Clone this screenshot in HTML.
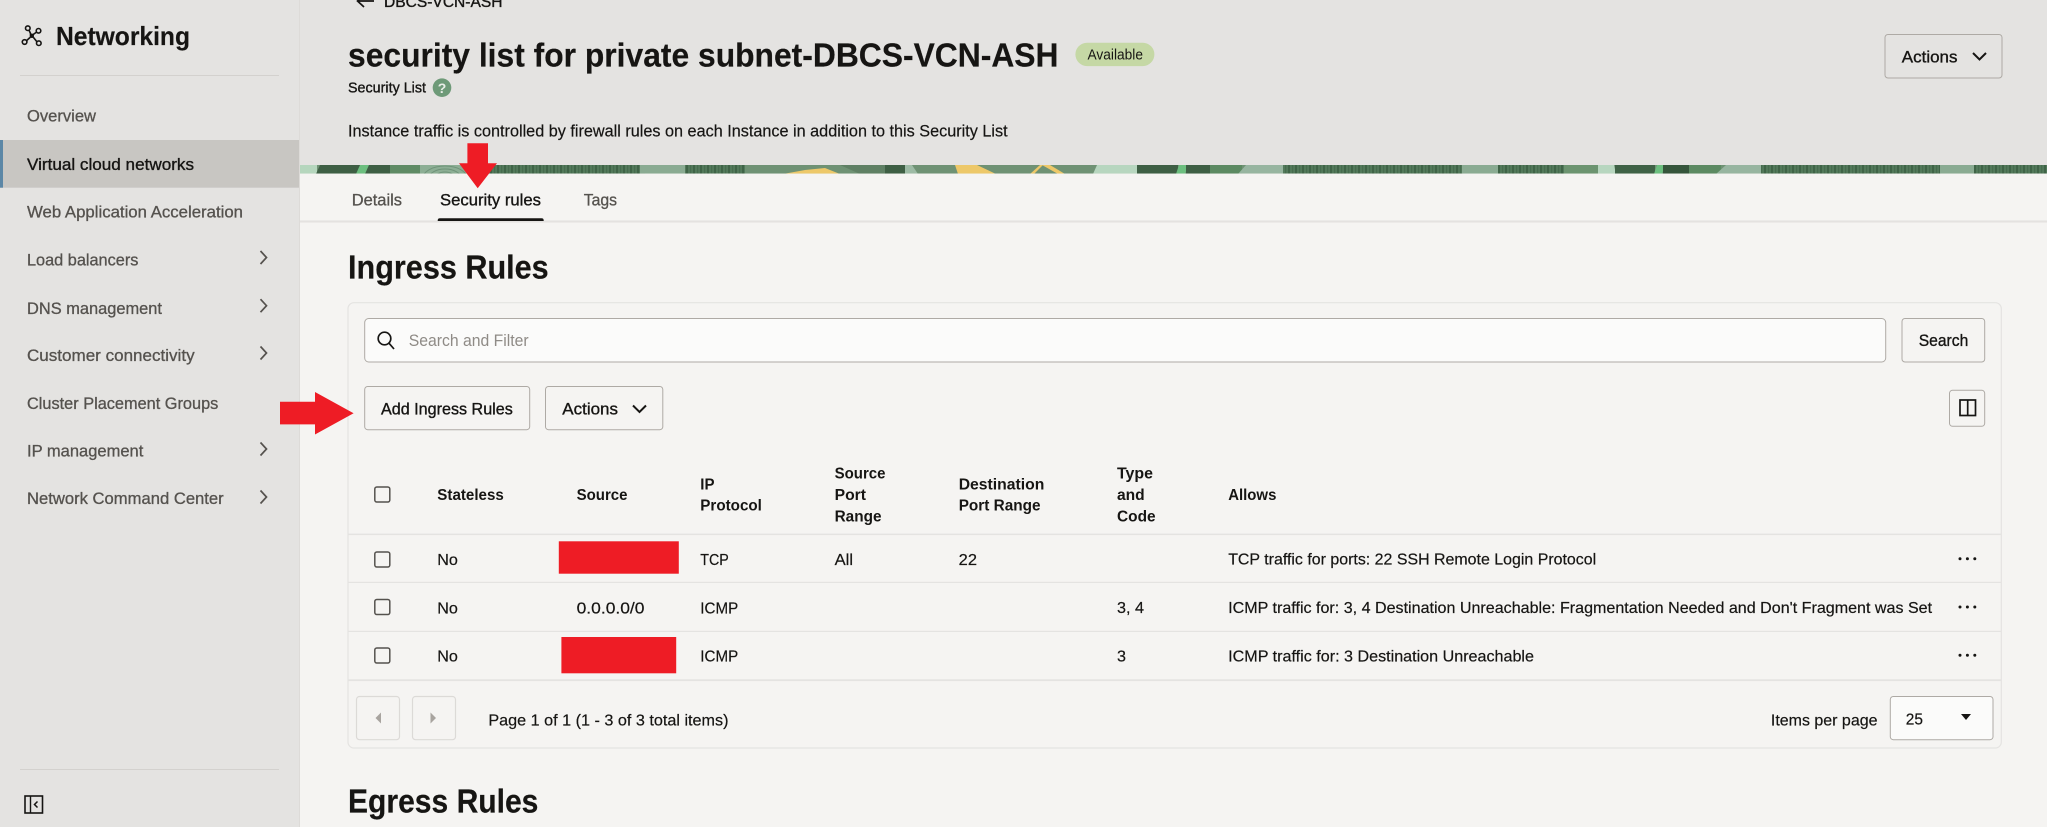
<!DOCTYPE html>
<html lang="en"><head><meta charset="utf-8"><title>security list for private subnet-DBCS-VCN-ASH</title>
<style>
html,body{margin:0;padding:0;width:2047px;height:827px;overflow:hidden;background:#f5f4f2}
svg{display:block;filter:blur(.3px)}
text{font-family:"Liberation Sans",sans-serif;font-size:16px;fill:#161513;white-space:pre}
.n{fill:#55524e;stroke:#55524e;stroke-width:.3px;font-size:16.5px;transform:translateY(-.7px)}
.a{stroke:#161513;stroke-width:.35px;font-size:16.5px}
.u{stroke:#161513;stroke-width:.2px;transform:translateY(-.7px)}
.b{font-weight:700;font-size:16px;transform:translateY(-.7px)}
.h{font-weight:700;font-size:33px;stroke:#161513;stroke-width:.2px}
.btn{fill:none;stroke:#aeaaa5;stroke-width:1}
.chev{fill:none;stroke:#161513;stroke-width:2}
.nch{fill:none;stroke:#55524e;stroke-width:1.7}
.cb{fill:none;stroke:#55524e;stroke-width:1.5}
.line{fill:#e4e3e1}
</style></head><body>
<svg xmlns="http://www.w3.org/2000/svg" width="2047" height="827" viewBox="0 0 2047 827">
<defs>
<pattern id="ln" width="7" height="9" patternUnits="userSpaceOnUse"><rect width="7" height="9" fill="#52795a"/><rect width="2" height="9" fill="#3f6447"/><rect x="4" width="1.2" height="9" fill="#466c4e"/></pattern>
<clipPath id="bn"><rect x="300" y="165" width="1747" height="8.6"/></clipPath>
</defs>
<rect width="2047" height="827" fill="#f5f4f2"/>

<!-- sidebar -->
<rect width="300" height="827" fill="#e4e3e1"/>
<rect x="299" width="1" height="827" fill="#dddbd8"/>
<g fill="none" stroke="#161513" stroke-width="1.6">
<circle cx="27.8" cy="28.2" r="2.3"/><circle cx="38.5" cy="30.8" r="2.3"/><circle cx="24.6" cy="42" r="2.3"/><circle cx="38.8" cy="43.2" r="2.3"/>
<path d="M29 30.2 31 34.5M36.7 32 33.2 34.5M26.6 40.6 30 37.5M36.9 41.8 33.5 37.5"/><rect x="30" y="34" width="3.6" height="3.6" fill="#161513" stroke-width=".6"/>
</g>
<text x="56" y="45" class="h" style="font-size:26px" textLength="134" lengthAdjust="spacingAndGlyphs">Networking</text>
<rect x="20" y="75" width="259" height="1" fill="#d3d1ce"/>
<rect y="140" width="299" height="47.7" fill="#c8c6c2"/>
<rect y="140" width="3" height="47.7" fill="#5c87a6"/>
<text x="27" y="122.3" class="n" textLength="69" lengthAdjust="spacingAndGlyphs">Overview</text>
<text x="27" y="170" class="a" textLength="167" lengthAdjust="spacingAndGlyphs">Virtual cloud networks</text>
<text x="27" y="218" class="n" textLength="216" lengthAdjust="spacingAndGlyphs">Web Application Acceleration</text>
<text x="27" y="266.3" class="n" textLength="111.4" lengthAdjust="spacingAndGlyphs">Load balancers</text>
<text x="27" y="314.5" class="n" textLength="135" lengthAdjust="spacingAndGlyphs">DNS management</text>
<text x="27" y="361.8" class="n" textLength="167.6" lengthAdjust="spacingAndGlyphs">Customer connectivity</text>
<text x="27" y="409.6" class="n" textLength="191.3" lengthAdjust="spacingAndGlyphs">Cluster Placement Groups</text>
<text x="27" y="457.3" class="n" textLength="116.3" lengthAdjust="spacingAndGlyphs">IP management</text>
<text x="27" y="504.7" class="n" textLength="196.7" lengthAdjust="spacingAndGlyphs">Network Command Center</text>
<path class="nch" d="M260.5 251 266.5 257.5 260.5 264"/>
<path class="nch" d="M260.5 299.2 266.5 305.7 260.5 312.2"/>
<path class="nch" d="M260.5 346.5 266.5 353 260.5 359.5"/>
<path class="nch" d="M260.5 442.5 266.5 449 260.5 455.5"/>
<path class="nch" d="M260.5 490.5 266.5 497 260.5 503.5"/>
<rect x="20" y="769" width="259" height="1" fill="#d3d1ce"/>
<rect x="25" y="796" width="17.5" height="17" fill="none" stroke="#161513" stroke-width="1.6"/>
<path d="M30.5 796V813" stroke="#161513" stroke-width="1.4"/>
<path d="M37.5 801.5 34.5 804.5 37.5 807.5" fill="none" stroke="#161513" stroke-width="1.5"/>

<!-- header -->
<rect x="300" width="1747" height="165" fill="#e4e3e1"/>
<path d="M374 1H358M364 -5 357.5 1 364 7" fill="none" stroke="#161513" stroke-width="1.7"/>
<text x="384" y="6.8" class="a" style="font-size:15.5px" textLength="118.5" lengthAdjust="spacingAndGlyphs">DBCS-VCN-ASH</text>
<text x="348" y="66.5" class="h" textLength="710.5" lengthAdjust="spacingAndGlyphs">security list for private subnet-DBCS-VCN-ASH</text>
<rect x="1075.4" y="42.7" width="79" height="23.4" rx="11.7" fill="#c5d8a5"/>
<text x="1087.5" y="59.7" style="font-size:14.5px" textLength="55.5" lengthAdjust="spacingAndGlyphs">Available</text>
<text x="348" y="92.6" class="a" style="font-size:14.5px" textLength="78" lengthAdjust="spacingAndGlyphs">Security List</text>
<circle cx="442" cy="87.7" r="9.3" fill="#6e9a78"/>
<text x="442" y="93" text-anchor="middle" style="font-size:14px;font-weight:700;fill:#e9eee8">?</text>
<text x="348" y="136.5" style="font-size:16.5px;stroke:#161513;stroke-width:.2px" textLength="659.6" lengthAdjust="spacingAndGlyphs">Instance traffic is controlled by firewall rules on each Instance in addition to this Security List</text>
<rect x="1885" y="34.5" width="117" height="43.5" rx="3" class="btn"/>
<text x="1901.8" y="62.6" class="a" textLength="55.7" lengthAdjust="spacingAndGlyphs">Actions</text>
<path class="chev" d="M1973 53 1979.5 59.5 1986 53"/>

<!-- banner -->
<g clip-path="url(#bn)">
<rect x="300" y="165" width="1747" height="9" fill="#6f9274"/>
<rect x="300" y="165" width="17" height="9" fill="#b5d6bd"/>
<polygon points="320,165 362,165 358,174 316,174" fill="#3e5f44"/>
<polygon points="360,165 369,165 365,174 356,174" fill="#6cbf7f"/>
<polygon points="369,165 392,165 390,174 365,174" fill="#3e5f44"/>
<rect x="390" y="165" width="32" height="9" fill="#5f8b65"/>
<rect x="420" y="165" width="70" height="9" fill="#8cae94"/>
<g fill="none" stroke="#6f9379" stroke-width="1"><ellipse cx="445" cy="178" rx="22" ry="12"/><ellipse cx="445" cy="178" rx="16" ry="9"/><ellipse cx="445" cy="178" rx="10" ry="6"/></g>
<rect x="485" y="165" width="160" height="9" fill="url(#ln)"/>
<rect x="640" y="165" width="45" height="9" fill="#8aab92"/>
<rect x="685" y="165" width="60" height="9" fill="url(#ln)"/>
<rect x="745" y="165" width="145" height="9" fill="#6f9274"/>
<polygon points="783,174 805,170 825,168 840,174" fill="#edc869"/>
<polygon points="840,165 885,165 885,174 860,174" fill="#5f8064"/>
<rect x="885" y="165" width="20" height="9" fill="#3e5f44"/>
<polygon points="905,165 912,165 918,174 905,174" fill="#9dbba5"/>
<polygon points="955,165 977,165 996,174 958,174" fill="#edc869"/>
<polygon points="1042,165 1050,165 1065,174 1058,174" fill="#edc869"/>
<polygon points="1040,165 1043,165 1034,174 1030,174" fill="#edc869"/>
<polygon points="1097,165 1137,165 1139,174 1093,174" fill="#b7d6bf"/>
<rect x="1137" y="165" width="41" height="9" fill="#3e5f44"/>
<polygon points="1179,165 1188,165 1185,174 1176,174" fill="#6cbf7f"/>
<rect x="1186" y="165" width="24" height="9" fill="#3e5f44"/>
<rect x="1210" y="165" width="32" height="9" fill="#5c8a62"/>
<polygon points="1246,165 1283,165 1283,174 1238,174" fill="#97b5a0"/>
<rect x="1283" y="165" width="180" height="9" fill="url(#ln)"/>
<rect x="1462" y="165" width="36" height="9" fill="#8aab92"/>
<rect x="1498" y="165" width="66" height="9" fill="url(#ln)"/>
<rect x="1564" y="165" width="34" height="9" fill="#6c9470"/>
<polygon points="1598,165 1614,165 1616,174 1598,174" fill="#b7d6bf"/>
<rect x="1615" y="165" width="40" height="9" fill="#3f6246"/>
<polygon points="1657,165 1665,165 1662,174 1654,174" fill="#6cbf7f"/>
<rect x="1663" y="165" width="26" height="9" fill="#35553b"/>
<rect x="1689" y="165" width="32" height="9" fill="#5c8a62"/>
<polygon points="1726,165 1761,165 1761,174 1716,174" fill="#97b5a0"/>
<rect x="1761" y="165" width="180" height="9" fill="url(#ln)"/>
<rect x="1940" y="165" width="34" height="9" fill="#8aab92"/>
<rect x="1974" y="165" width="73" height="9" fill="url(#ln)"/>
</g>

<!-- tabs -->
<rect x="300" y="173.6" width="1747" height="47" fill="#f5f4f2"/>
<rect x="300" y="220.6" width="1747" height="1" fill="#dcdad7"/>
<rect x="300" y="221.6" width="1747" height="1.4" fill="#eceae8"/>
<text x="351.7" y="206.4" class="n" textLength="50.3" lengthAdjust="spacingAndGlyphs">Details</text>
<text x="440" y="205.7" class="a" textLength="101" lengthAdjust="spacingAndGlyphs">Security rules</text>
<text x="583.7" y="206.4" class="n" textLength="33.3" lengthAdjust="spacingAndGlyphs">Tags</text>
<path d="M437.7 221V220.5Q437.7 218.3 440 218.3H541.5Q543.7 218.3 543.7 220.5V221Z" fill="#161513"/>

<!-- ingress panel -->
<text x="348" y="278.3" class="h" textLength="200.7" lengthAdjust="spacingAndGlyphs">Ingress Rules</text>
<rect x="348" y="302.7" width="1653.3" height="445.3" rx="6" fill="#f5f4f2" stroke="#e4e3e1" stroke-width="1.2"/>
<rect x="364.7" y="318.5" width="1521" height="43.5" rx="4" fill="#fbfbfa" stroke="#aeaaa5" stroke-width="1"/>
<circle cx="384.5" cy="338.5" r="6.3" fill="none" stroke="#161513" stroke-width="1.7"/>
<path d="M389 343.2 394 349" stroke="#161513" stroke-width="1.7" fill="none"/>
<text x="408.7" y="346" style="font-size:16.5px;fill:#8f8b86" textLength="120" lengthAdjust="spacingAndGlyphs">Search and Filter</text>
<rect x="1902" y="318.5" width="82.7" height="43.5" rx="3" class="btn"/>
<text x="1918.7" y="346" class="a" textLength="49.6" lengthAdjust="spacingAndGlyphs">Search</text>
<rect x="364.7" y="386.5" width="165" height="43.2" rx="3" class="btn"/>
<text x="381" y="414.3" class="a" textLength="131.8" lengthAdjust="spacingAndGlyphs">Add Ingress Rules</text>
<rect x="545.5" y="386.5" width="117.3" height="43.2" rx="3" class="btn"/>
<text x="562.3" y="414.3" class="a" textLength="55.7" lengthAdjust="spacingAndGlyphs">Actions</text>
<path class="chev" d="M633 405.5 639.5 412 646 405.5"/>
<rect x="1949.5" y="390.3" width="35.2" height="36" rx="3" class="btn"/>
<rect x="1960" y="400" width="15.5" height="15.5" fill="none" stroke="#161513" stroke-width="1.7"/>
<path d="M1967.7 400V415.5" stroke="#161513" stroke-width="1.7"/>

<!-- table header -->
<rect x="374.8" y="487" width="15" height="15" rx="2" class="cb"/>
<text x="437.3" y="500.7" class="b" textLength="66.5" lengthAdjust="spacingAndGlyphs">Stateless</text>
<text x="576.6" y="500.7" class="b" textLength="50.9" lengthAdjust="spacingAndGlyphs">Source</text>
<text x="700.3" y="490" class="b" textLength="14.2" lengthAdjust="spacingAndGlyphs">IP</text>
<text x="700.3" y="511.3" class="b" textLength="61.6" lengthAdjust="spacingAndGlyphs">Protocol</text>
<text x="834.6" y="479.3" class="b" textLength="50.9" lengthAdjust="spacingAndGlyphs">Source</text>
<text x="834.6" y="500.7" class="b" textLength="31.4" lengthAdjust="spacingAndGlyphs">Port</text>
<text x="834.6" y="522" class="b" textLength="46.9" lengthAdjust="spacingAndGlyphs">Range</text>
<text x="958.7" y="490" class="b" textLength="85.7" lengthAdjust="spacingAndGlyphs">Destination</text>
<text x="958.7" y="511.3" class="b" textLength="81.8" lengthAdjust="spacingAndGlyphs">Port Range</text>
<text x="1117" y="479" class="b" textLength="36" lengthAdjust="spacingAndGlyphs">Type</text>
<text x="1117" y="500.7" class="b" textLength="27.7" lengthAdjust="spacingAndGlyphs">and</text>
<text x="1117" y="522" class="b" textLength="38.6" lengthAdjust="spacingAndGlyphs">Code</text>
<text x="1228.2" y="500.7" class="b" textLength="48.2" lengthAdjust="spacingAndGlyphs">Allows</text>
<rect x="348" y="533.6" width="1653" height="1.5" class="line"/>
<rect x="348" y="581.8" width="1653" height="1.2" class="line"/>
<rect x="348" y="630.8" width="1653" height="1.2" class="line"/>
<rect x="348" y="679.3" width="1653" height="1.8" class="line"/>

<!-- row 1 -->
<rect x="374.8" y="552" width="15" height="15" rx="2" class="cb"/>
<text x="437.3" y="565.7" class="u" textLength="20.6" lengthAdjust="spacingAndGlyphs">No</text>
<rect x="558.8" y="541.3" width="120" height="32.4" fill="#ee1c25"/>
<text x="700.3" y="565.7" class="u" textLength="28.5" lengthAdjust="spacingAndGlyphs">TCP</text>
<text x="834.6" y="565.7" class="u" textLength="18.4" lengthAdjust="spacingAndGlyphs">All</text>
<text x="958.7" y="565.7" class="u" textLength="18.3" lengthAdjust="spacingAndGlyphs">22</text>
<text x="1228.2" y="565.2" class="u" textLength="368" lengthAdjust="spacingAndGlyphs">TCP traffic for ports: 22 SSH Remote Login Protocol</text>
<g fill="#161513"><circle cx="1960" cy="558.7" r="1.5"/><circle cx="1967.4" cy="558.7" r="1.5"/><circle cx="1974.8" cy="558.7" r="1.5"/></g>

<!-- row 2 -->
<rect x="374.8" y="599.5" width="15" height="15" rx="2" class="cb"/>
<text x="437.3" y="614" class="u" textLength="20.6" lengthAdjust="spacingAndGlyphs">No</text>
<text x="576.6" y="614" class="u" textLength="67.9" lengthAdjust="spacingAndGlyphs">0.0.0.0/0</text>
<text x="700.3" y="614" class="u" textLength="37.9" lengthAdjust="spacingAndGlyphs">ICMP</text>
<text x="1117" y="613.5" class="u" textLength="27" lengthAdjust="spacingAndGlyphs">3, 4</text>
<text x="1228.2" y="613.5" class="u" textLength="703.9" lengthAdjust="spacingAndGlyphs">ICMP traffic for: 3, 4 Destination Unreachable: Fragmentation Needed and Don't Fragment was Set</text>
<g fill="#161513"><circle cx="1960" cy="607" r="1.5"/><circle cx="1967.4" cy="607" r="1.5"/><circle cx="1974.8" cy="607" r="1.5"/></g>

<!-- row 3 -->
<rect x="374.8" y="648" width="15" height="15" rx="2" class="cb"/>
<text x="437.3" y="662.3" class="u" textLength="20.6" lengthAdjust="spacingAndGlyphs">No</text>
<rect x="561.4" y="637" width="114.8" height="36.3" fill="#ee1c25"/>
<text x="700.3" y="662.3" class="u" textLength="37.9" lengthAdjust="spacingAndGlyphs">ICMP</text>
<text x="1117" y="662" class="u" textLength="9" lengthAdjust="spacingAndGlyphs">3</text>
<text x="1228.2" y="662" class="u" textLength="305.8" lengthAdjust="spacingAndGlyphs">ICMP traffic for: 3 Destination Unreachable</text>
<g fill="#161513"><circle cx="1960" cy="655.3" r="1.5"/><circle cx="1967.4" cy="655.3" r="1.5"/><circle cx="1974.8" cy="655.3" r="1.5"/></g>

<!-- pagination -->
<rect x="356.5" y="696.5" width="43" height="43.2" rx="3" fill="none" stroke="#dcdad7" stroke-width="1.2"/>
<rect x="412.5" y="696.5" width="43" height="43.2" rx="3" fill="none" stroke="#dcdad7" stroke-width="1.2"/>
<polygon points="381,712.5 381,723.5 375.5,718" fill="#a8a49f"/>
<polygon points="430.5,712.5 430.5,723.5 436,718" fill="#a8a49f"/>
<text x="488.4" y="726" class="u" textLength="240.1" lengthAdjust="spacingAndGlyphs">Page 1 of 1 (1 - 3 of 3 total items)</text>
<text x="1770.9" y="726" class="u" textLength="106.6" lengthAdjust="spacingAndGlyphs">Items per page</text>
<rect x="1890.3" y="696.5" width="102.7" height="43.2" rx="3" fill="#fbfbfa" stroke="#aeaaa5" stroke-width="1"/>
<text x="1905.8" y="725" class="u" textLength="17.2" lengthAdjust="spacingAndGlyphs">25</text>
<polygon points="1961,714 1971,714 1966,720" fill="#161513"/>

<text x="348" y="812.6" class="h" textLength="190.4" lengthAdjust="spacingAndGlyphs">Egress Rules</text>

<!-- red annotation arrows -->
<polygon points="467.4,143.3 488,143.3 488,163.3 497,163.3 477.7,188.3 459,163.3 467.4,163.3" fill="#ee1c25"/>
<polygon points="280,401.8 315,401.8 315,392 353.6,413.3 315,434.5 315,424.4 280,424.4" fill="#ee1c25"/>
</svg>
</body></html>
